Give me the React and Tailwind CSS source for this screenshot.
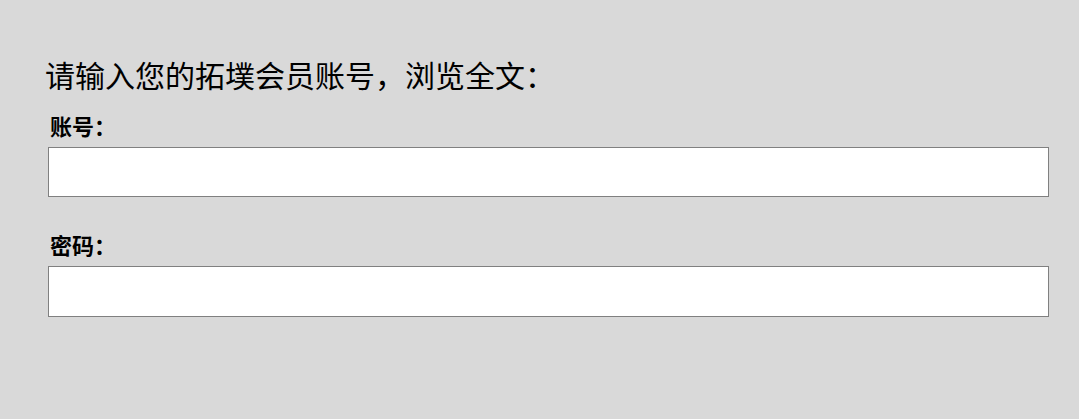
export default function App() {
  const font = { fontFamily: '"Liberation Serif", "Noto Sans CJK SC", serif' };
  return (
    <div className="min-h-[419px] w-full bg-[#d9d9d9] text-black" style={font}>
      <div className="pt-[57px] pl-[45px] pr-[30px]">
        <h1 className="text-[30px] leading-[40px] font-normal">请输入您的拓墣会员账号，浏览全文：</h1>
        <div className="pl-[3px]">
          <label className="block pl-[2px] pt-[17px] text-[22px] leading-[28px] font-bold">账号：</label>
          <input type="text" className="mt-[5px] block h-[50px] w-full border border-[#808080] bg-white outline-none" />
          <label className="block pl-[2px] pt-[36px] text-[22px] leading-[28px] font-bold">密码：</label>
          <input type="password" className="mt-[5px] block h-[51px] w-full border border-[#808080] bg-white outline-none" />
        </div>
      </div>
    </div>
  );
}
